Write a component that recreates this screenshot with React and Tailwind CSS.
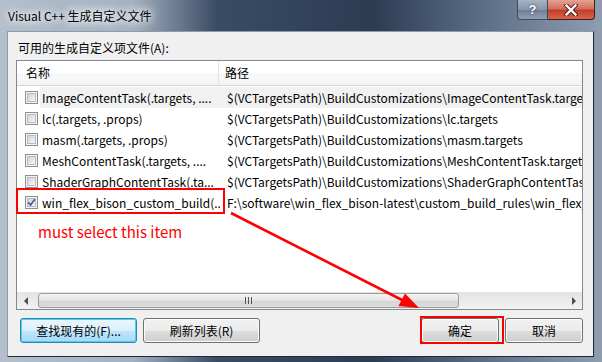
import React from 'react';

const ROWS = [
  { name: 'ImageContentTask(.targets, ....', path: '$(VCTargetsPath)\\BuildCustomizations\\ImageContentTask.targets', hot: true },
  { name: 'lc(.targets, .props)', path: '$(VCTargetsPath)\\BuildCustomizations\\lc.targets' },
  { name: 'masm(.targets, .props)', path: '$(VCTargetsPath)\\BuildCustomizations\\masm.targets' },
  { name: 'MeshContentTask(.targets, ....', path: '$(VCTargetsPath)\\BuildCustomizations\\MeshContentTask.targets' },
  { name: 'ShaderGraphContentTask(.ta...', path: '$(VCTargetsPath)\\BuildCustomizations\\ShaderGraphContentTask.targets' },
  { name: 'win_flex_bison_custom_build(...', path: 'F:\\software\\win_flex_bison-latest\\custom_build_rules\\win_flex_bison_custom_build.props', checked: true },
];

const CheckBox = ({ checked }) => (
  <div className="w-[13px] h-[13px] shrink-0 border border-[#8e8f8f] bg-[#f4f4f4] flex items-center justify-center">
    <div className="w-[9px] h-[9px] border border-[#b8bcc2] bg-[linear-gradient(135deg,#cfd3d8,#f7f7f8)] relative">
      {checked && (
        <svg className="absolute -left-[1px] -top-[1px]" width="9" height="9" viewBox="0 0 9 9">
          <path d="M1.2 4.4 L3.6 7 L7.8 1.2" fill="none" stroke="#3b5aa0" strokeWidth="1.6" />
        </svg>
      )}
    </div>
  </div>
);

const Button = ({ children, width, focused }) => (
  <div
    className={`${width} h-[25px] rounded-[3px] border flex items-center justify-center text-[12px] text-black ${
      focused
        ? 'border-[#3c7fb1] shadow-[inset_0_0_0_1px_#48d0f4] bg-[linear-gradient(#eaf6fd_0%,#d9f0fc_50%,#bee6fd_51%,#a7d9f5_100%)]'
        : 'border-[#707070] shadow-[inset_0_0_0_1px_#fbfbfb] bg-[linear-gradient(#f2f2f2_0%,#ebebeb_50%,#dddddd_51%,#cfcfcf_100%)]'
    }`}
  >
    {children}
  </div>
);

export default function App() {
  return (
    <div className="w-[602px] h-[362px] relative overflow-hidden flex flex-col font-['Noto_Sans_CJK_SC',sans-serif] bg-[linear-gradient(90deg,#b3bfcc_0%,#a3b1c1_22%,#3a4c64_36%,#2b3c53_62%,#61738b_82%,#8e9db0_100%)]">
      {/* title bar */}
      <div className="h-[31px] shrink-0 flex items-start">
        <div className="pl-[8px] pt-[7px] text-[12px] leading-[18px] text-black [text-shadow:0_0_6px_#ffffff,0_0_10px_#ffffff,0_0_14px_#ffffff]">
          Visual C++ 生成自定义文件
        </div>
        <div className="ml-auto mr-[7px] flex">
          <div className="w-[31px] h-[20px] border border-t-0 border-[#3d4a5c] rounded-bl-[4px] bg-[linear-gradient(#a6b3c2_0%,#8796a9_50%,#6c7d93_51%,#8fa0b4_100%)] flex items-center justify-center text-white text-[13px] font-bold [text-shadow:0_0_2px_#1b2533] font-['Liberation_Sans',sans-serif]">
            ?
          </div>
          <div className="w-[47px] h-[20px] border border-t-0 border-l-0 border-[#3d2020] rounded-br-[4px] bg-[linear-gradient(#e6a192_0%,#d4705c_45%,#c2402b_55%,#d9634d_100%)] flex items-center justify-center">
            <svg width="14" height="12" viewBox="0 0 14 12">
              <path d="M2.5 1.5 L11.5 10.5 M11.5 1.5 L2.5 10.5" stroke="#4a1a14" strokeWidth="4.2" strokeLinecap="square" />
              <path d="M2.5 1.5 L11.5 10.5 M11.5 1.5 L2.5 10.5" stroke="#ffffff" strokeWidth="2.4" strokeLinecap="square" />
            </svg>
          </div>
        </div>
      </div>

      {/* client area */}
      <div className="ml-[7px] mr-[8px] mb-[5px] flex-1 bg-[#f0f0f0] border border-[#8f9bab] border-r-[#1e2a3a] border-b-[#1e2a3a] flex flex-col pl-[8px] pr-[10px] pt-[8px]">
        <div className="h-[16px] leading-[16px] text-[12px] text-black ml-[2px] mb-[4px]">可用的生成自定义项文件(A):</div>

        {/* list view */}
        <div className="h-[250px] border border-[#828790] bg-white flex flex-col overflow-hidden text-[12px] text-black">
          <div className="h-[25px] shrink-0 flex border-b border-[#d5d5d5] bg-[linear-gradient(#ffffff_0%,#ffffff_50%,#f7f8f9_51%,#f3f4f6_100%)]">
            <div className="w-[202px] shrink-0 border-r border-[#e3e5e7] pl-[9px] flex items-center">名称</div>
            <div className="flex-1 pl-[6px] flex items-center">路径</div>
          </div>

          <div className="flex-1 flex flex-col pt-[1px]">
            {ROWS.map((r) => (
              <div key={r.name} className="h-[21px] flex items-center whitespace-nowrap">
                <div className="w-[203px] h-full shrink-0 flex items-center pl-[8px] overflow-hidden">
                  <CheckBox checked={r.checked} />
                  <div className={`ml-[2px] pl-[2px] h-full flex-1 flex items-center ${r.hot ? 'bg-[#f1f1f1]' : ''}`}>{r.name}</div>
                </div>
                <div className={`flex-1 h-full flex items-center pl-[7px] overflow-hidden ${r.hot ? 'bg-[#f1f1f1]' : ''}`}>{r.path}</div>
              </div>
            ))}
            <div className="pl-[21px] pt-[8px] text-[15px] leading-[22px] text-[#ff0000]">must select this item</div>
          </div>

          {/* horizontal scrollbar */}
          <div className="h-[17px] shrink-0 flex bg-[linear-gradient(#e3e3e3,#f2f2f2)]">
            <div className="w-[17px] flex items-center justify-center">
              <div className="w-0 h-0 border-y-[4px] border-y-transparent border-r-[4px] border-r-[#4d4d4d]" />
            </div>
            <div className="flex-1 flex items-center pl-[4px]">
              <div className="w-[421px] h-[15px] rounded-[3px] border border-[#9a9a9a] bg-[linear-gradient(#f4f4f4,#e4e4e4_50%,#d4d4d4_51%,#dcdcdc)] flex items-center justify-center gap-[2px]">
                <div className="w-[1px] h-[7px] bg-[#555]" />
                <div className="w-[1px] h-[7px] bg-[#555]" />
                <div className="w-[1px] h-[7px] bg-[#555]" />
              </div>
            </div>
            <div className="w-[17px] flex items-center justify-center">
              <div className="w-0 h-0 border-y-[4px] border-y-transparent border-l-[4px] border-l-[#4d4d4d]" />
            </div>
          </div>
        </div>

        {/* buttons */}
        <div className="mt-[8px] flex">
          <div className="flex gap-[6px] ml-[4px]">
            <Button width="w-[117px]" focused>查找现有的(F)...</Button>
            <Button width="w-[117px]">刷新列表(R)</Button>
          </div>
          <div className="ml-auto flex gap-[6px]">
            <Button width="w-[78px]">确定</Button>
            <Button width="w-[78px]">取消</Button>
          </div>
        </div>
      </div>

      {/* annotations */}
      <div className="absolute left-[16px] top-[188px] w-[209px] h-[26px] border-2 border-[#ff0000]" />
      <div className="absolute left-[420px] top-[316px] w-[84px] h-[28px] border-2 border-[#ff0000]" />
      <svg className="absolute left-0 top-0" width="602" height="362" viewBox="0 0 602 362">
        <line x1="231" y1="213" x2="404" y2="301" stroke="#ff0000" strokeWidth="2.6" />
        <polygon points="419,308 398.5,306 405,293.5" fill="#ff0000" />
      </svg>
    </div>
  );
}
